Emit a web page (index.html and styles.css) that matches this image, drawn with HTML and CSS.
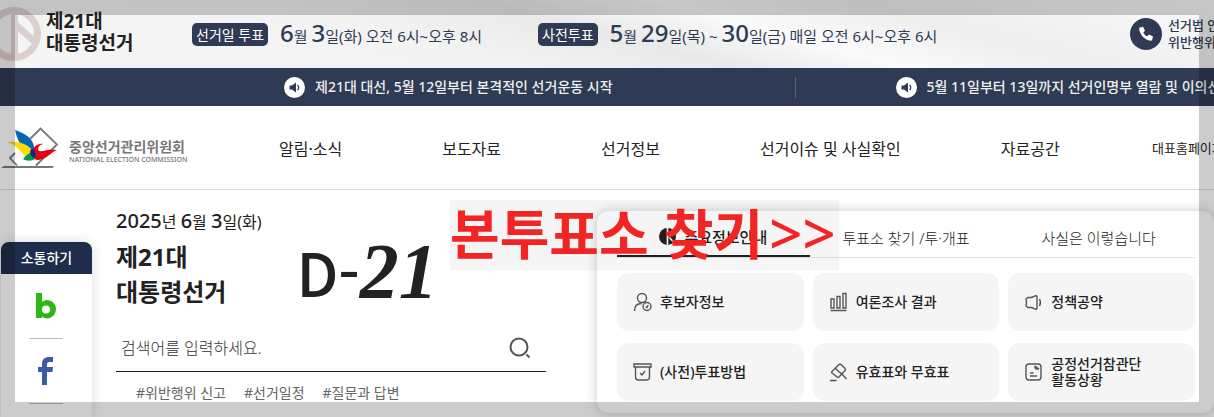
FILE: index.html
```html
<!DOCTYPE html>
<html lang="ko">

<head>
    <meta charset="UTF-8">
    <meta name="viewport" content="width=device-width, initial-scale=1.0">
    <title>제21대 대통령선거</title>
    <link rel="stylesheet" href="styles.css">
</head>

<body>
    <div class="top-bar">
        <svg class="stamp" width="41" height="54" viewBox="0 0 41 54" fill="none" stroke="#dccfcf" stroke-width="7">
            <circle cx="14" cy="27" r="23.5" />
            <path d="M14.500 4v46M16 18l18 16" />
        </svg>
        <strong class="top-title">제21대<br>대통령선거</strong>
        <p class="schedule first"><span class="badge">선거일 투표</span><span><b>6</b>월 <b>3</b>일(화) 오전 6시~오후 8시</span></p>
        <p class="schedule"><span class="badge">사전투표</span><span><b>5</b>월 <b>29</b>일(목) ~ <b>30</b>일(금) 매일 오전 6시~오후 6시</span></p>
        <a class="call" href="#">
            <svg width="32" height="32" viewBox="0 0 32 32">
                <circle cx="16" cy="16" r="16" fill="#2f3a54" />
                <path d="M10 9.500l3-.8 2 4-1.700 1.700c.8 1.700 2.200 3.100 3.900 3.900l1.800-1.700 4 2-.8 3.200c-.2.700-.8 1-1.500.9C14.800 22 10 17.200 9.200 11c-.1-.7.2-1.300.8-1.500z" fill="#fff" />
            </svg>
            <span>선거법 안내<br>위반행위 신고</span>
        </a>
    </div>

    <div class="notice-bar">
        <a class="notice" href="#">
            <svg width="21" height="21" viewBox="0 0 21 21">
                <circle cx="10.500" cy="10.500" r="10.500" fill="#fff" />
                <path d="M5.500 8.500H8l4-3v10l-4-3H5.500z" fill="#2f3a54" />
                <path d="M13.500 8q2.500 2.500 0 5" fill="none" stroke="#2f3a54" stroke-width="1.200" />
            </svg>
            제21대 대선, 5월 12일부터 본격적인 선거운동 시작
        </a>
        <a class="notice" href="#">
            <svg width="21" height="21" viewBox="0 0 21 21">
                <circle cx="10.500" cy="10.500" r="10.500" fill="#fff" />
                <path d="M5.500 8.500H8l4-3v10l-4-3H5.500z" fill="#2f3a54" />
                <path d="M13.500 8q2.500 2.500 0 5" fill="none" stroke="#2f3a54" stroke-width="1.200" />
            </svg>
            5월 11일부터 13일까지 선거인명부 열람 및 이의신청
        </a>
    </div>

    <header class="header">
        <a class="logo" href="#">
            <svg width="58" height="44" viewBox="0 0 58 44">
                <path d="M24 18L39.500 2.500 56 18.500 35 39.500M14 27l-5 5 7 7.500" fill="none" stroke="#777" stroke-width="1.800" />
                <path d="M0 42L3 40h50l-1.500 2z" fill="#777" />
                <path d="M14 4c9 3 18 8 19 17l1 8c-4 1-6-2-9-5-6-5-9-11-11-20z" fill="#0068b7" />
                <path d="M7 16c10-1 20 2 25 9l2 6c-4 2-8 1-11-2-4-5-9-10-16-13z" fill="#ffd900" />
                <path d="M42 18c-5-1-11 3-11 10 0 6 5 7 10 5 7-2 9-7 15-9-8-2-13 2-18 1-2-3 0-6 4-7z" fill="#e60012" />
                <path d="M22 33c3-4 7-7 12-8 3 3 1 7-2 9-3 1-7 1-10-1z" fill="#009944" />
                <path d="M30 23c4 0 6 4 4 9-4-1-6-4-4-9z" fill="#1d2088" />
            </svg>
            <span class="logo-text">중앙선거관리위원회<small>NATIONAL ELECTION COMMISSION</small></span>
        </a>
        <nav class="nav">
            <a href="#">알림·소식</a>
            <a href="#">보도자료</a>
            <a href="#">선거정보</a>
            <a href="#">선거이슈 및 사실확인</a>
            <a href="#">자료공간</a>
        </nav>
        <a class="home-link" href="#">대표홈페이지</a>
    </header>

    <main class="main">
        <aside class="share">
            <h2>소통하기</h2>
            <a href="#" aria-label="블로그">
                <svg width="22" height="26" viewBox="0 0 22 26">
                    <path fill-rule="evenodd" d="M1 0h6v9c1-1 3-2 5-2 5 0 9 4 9 9s-4 9.500-9 9.500c-2 0-4-1-5-2V25H1zM11 12.500a4 4 0 1 0 0 8 4 4 0 0 0 0-8z" fill="#2db816" />
                </svg>
            </a>
            <a href="#" aria-label="페이스북">
                <svg width="16" height="28" viewBox="0 0 16 28">
                    <path d="M4 28V15H0v-5h4V7c0-5 3-7 7-7h4v5h-3c-2 0-3 .5-3 2.500V10h6l-.5 5H9v13z" fill="#3b5ba9" />
                </svg>
            </a>
        </aside>

        <section class="intro">
            <p class="date"><b>2025</b>년 <b>6</b>월 <b>3</b>일(화)</p>
            <div class="intro-row">
                <h1>제21대<br>대통령선거</h1>
                <p class="dday">D-<em>21</em></p>
            </div>
            <form class="search">
                <input type="text" placeholder="검색어를 입력하세요." aria-label="검색어">
                <button type="button" aria-label="검색">
                    <svg width="22" height="22" viewBox="0 0 22 22" fill="none" stroke="#555" stroke-width="2">
                        <circle cx="10" cy="10" r="8.500" />
                        <path d="M17.500 17.500l3 3" />
                    </svg>
                </button>
            </form>
            <div class="tags">
                <a href="#">#위반행위 신고</a>
                <a href="#">#선거일정</a>
                <a href="#">#질문과 답변</a>
            </div>
        </section>

        <section class="panel">
            <div class="tabs">
                <button type="button" class="active">
                    <svg width="17" height="17" viewBox="0 0 17 17">
                        <circle cx="8.500" cy="8.500" r="8.500" fill="#222" />
                        <path d="M8.500 0v17M9 8l6 6.500" stroke="#fff" stroke-width="1.600" />
                    </svg>
                    주요정보안내
                </button>
                <button type="button">투표소 찾기 /투·개표</button>
                <button type="button">사실은 이렇습니다</button>
            </div>
            <div class="cards">
                <a href="#">
                    <svg viewBox="0 0 20 20">
                        <circle cx="9" cy="6" r="4.500" />
                        <path d="M1.500 19c0-5 3-7.500 7-7.500" />
                        <circle cx="14" cy="14.500" r="4" />
                        <path d="M12.800 14.500l1 1 1.500-2.500" />
                    </svg>
                    후보자정보
                </a>
                <a href="#">
                    <svg viewBox="0 0 20 20">
                        <path d="M2 7h3v9H2zM8 4.500h3V16H8zM14 1.500h3V16h-3zM1.500 18.500h16" />
                    </svg>
                    여론조사 결과
                </a>
                <a href="#">
                    <svg viewBox="0 0 20 20">
                        <path d="M2 7l2-1.500h3.500L12 3.500l1 1v12l-1 1-4.500-2H4L2 14l.5-3.500zM15.500 7q2 3.500 0 7" />
                    </svg>
                    정책공약
                </a>
                <a href="#">
                    <svg viewBox="0 0 20 20">
                        <path d="M1 2h17v3H1zM2.500 5v10q0 3 3 3h8q3 0 3-3V5M7 11l2 2 3-4" />
                    </svg>
                    (사전)투표방법
                </a>
                <a href="#">
                    <svg viewBox="0 0 20 20">
                        <path d="M3 9.500L10 2.500q1-1 2 0l4 4q1 1 0 2L10 15q-1 1-2 0l-5-4q-.8-.8 0-1.500zM6.500 6.500l6.500 6M12 11l5.500 6M1 18.500h6.500" />
                    </svg>
                    유효표와 무효표
                </a>
                <a href="#">
                    <svg viewBox="0 0 20 20">
                        <path d="M5 2h9q3 0 3 3v10q0 3-3 3H5q-3 0-3-3V5q0-3 3-3zM11 4v1q0 2 2 2h2M11 4l4 3M6 11h3.500M6 14h7" />
                    </svg>
                    <span>공정선거참관단<br>활동상황</span>
                </a>
            </div>
        </section>
    </main>

    <a class="find-banner" href="#">본투표소 찾기<span>&gt;&gt;</span></a>
    <div class="frame"></div>
</body>

</html>
```

FILE: styles.css
```css
* {
    box-sizing: border-box;
}

body {
    margin: 0;
    font-family: "Noto Sans", "Noto Sans CJK KR", sans-serif;
    font-size: 16px;
    color: #222;
    background-color: #fff;
    white-space: nowrap;
    overflow: hidden;
}

a {
    color: inherit;
    text-decoration: none;
}

p, h1, h2 {
    margin: 0;
}

svg {
    flex: none;
}

button {
    padding: 0;
    border: none;
    background: none;
    font-family: inherit;
    color: inherit;
    cursor: pointer;
}

.top-bar {
    display: flex;
    align-items: center;
    height: 68px;
    color: #2f3a54;
    background: linear-gradient(15deg, #f5f5f5 0%, #f3f3f3 35%, #e9e9e9 50%, #fafafa 62%, #eeeeee 75%, #fafafa 100%);
}

.top-title {
    width: 146px;
    margin-left: 5px;
    padding-bottom: 4px;
    font-size: 19px;
    line-height: 22px;
    color: #222;
}

.schedule {
    display: flex;
    align-items: center;
    gap: 12px;
    font-size: 15px;
    line-height: 30px;
}

.schedule.first {
    margin-right: 56px;
}

.schedule b {
    font-size: 24px;
    font-weight: 500;
}

.badge {
    padding: 0 4px;
    border-radius: 5px;
    font-size: 14px;
    line-height: 23px;
    color: #fff;
    background-color: #2f3a54;
}

.call {
    display: flex;
    align-items: center;
    gap: 6px;
    width: 84px;
    margin-left: auto;
    font-size: 13px;
    font-weight: 500;
    line-height: 17px;
}

.notice-bar {
    display: flex;
    align-items: center;
    height: 38px;
    padding-left: 284px;
    color: #eee;
    background-color: #2f3a54;
}

.notice {
    display: flex;
    align-items: center;
    gap: 10px;
    font-size: 14px;
    font-weight: 500;
    line-height: 20px;
}

.notice + .notice {
    margin-left: 182px;
    padding-left: 100px;
    border-left: 1px solid #5b6479;
}

.header {
    display: flex;
    align-items: center;
    height: 84px;
    border-bottom: 1px solid #ddd;
}

.logo {
    display: flex;
    align-items: center;
    gap: 10px;
    width: 279px;
    padding-left: 1px;
}

.logo-text {
    padding-top: 6px;
    font-size: 14px;
    font-weight: bold;
    line-height: 18px;
    color: #777;
}

.logo-text small {
    display: block;
    font-size: 7px;
    font-weight: 500;
    line-height: 8px;
}

.nav {
    display: flex;
    gap: 100px;
}

.home-link {
    width: 62px;
    margin-left: auto;
    font-size: 13px;
}

.main {
    display: flex;
    align-items: flex-start;
}

.share {
    width: 91px;
    height: 175px;
    margin: 52px 24px 0 1px;
    border-radius: 8px 8px 0 0;
    box-shadow: 0 0 12px rgba(0, 0, 0, 0.15);
}

.share h2 {
    border-radius: 8px 8px 0 0;
    font-size: 14px;
    font-weight: 500;
    line-height: 32px;
    text-align: center;
    color: #fff;
    background-color: #202c4b;
}

.share a {
    display: flex;
    align-items: center;
    justify-content: center;
    height: 65px;
    margin: 0 29px 0 28px;
    border-bottom: 1px solid #bbb;
}

.intro {
    width: 430px;
    padding-top: 20px;
}

.date {
    line-height: 22px;
}

.date b {
    font-size: 20px;
    font-weight: 500;
}

.intro-row {
    display: flex;
    gap: 70px;
    padding-top: 6px;
}

.intro h1 {
    font-size: 24px;
    line-height: 35px;
}

.dday {
    font-family: "Noto Sans CJK KR", sans-serif;
    font-size: 60px;
    font-weight: 500;
    line-height: 64px;
}

.dday em {
    font-family: "Liberation Serif", serif;
    font-size: 78px;
    font-weight: bold;
    line-height: 64px;
}

.search {
    display: flex;
    align-items: center;
    margin-top: 15px;
    padding: 0 15px 0 5px;
    border-bottom: 1px solid #222;
}

.search input {
    flex: 1;
    height: 47px;
    padding: 0;
    border: none;
    outline: none;
    font-family: inherit;
    font-size: 16px;
    font-weight: 300;
}

.search input::placeholder {
    color: #333;
}

.search svg {
    display: block;
}

.tags {
    display: flex;
    gap: 18px;
    padding: 11px 20px 0;
    font-size: 14px;
    line-height: 20px;
    color: #666;
}

.panel {
    flex: 1;
    margin: 21px 0 0 51px;
    padding: 0 19px 12px 20px;
    border-radius: 12px;
    box-shadow: 0 0 12px rgba(0, 0, 0, 0.2);
}

.tabs {
    display: grid;
    grid-template-columns: repeat(3, 1fr);
    height: 47px;
    border-bottom: 1px solid #e5e5e5;
}

.tabs button {
    padding-top: 6px;
    font-size: 15px;
    font-weight: 300;
}

.tabs .active {
    display: flex;
    align-items: center;
    justify-content: center;
    gap: 8px;
    border-bottom: 2px solid #222;
    font-weight: 500;
}

.cards {
    display: grid;
    grid-template-columns: repeat(3, 1fr);
    gap: 12px 9px;
    padding-top: 15px;
}

.cards a {
    display: flex;
    align-items: center;
    gap: 7px;
    height: 58px;
    padding-left: 16px;
    border-radius: 12px;
    font-size: 14px;
    font-weight: 500;
    line-height: 16px;
    background-color: #f5f5f5;
}

.cards svg {
    width: 20px;
    height: 20px;
    fill: none;
    stroke: #555;
    stroke-width: 1.4;
}

/* banner and frame lie over the page */
.find-banner {
    position: absolute;
    top: 200px;
    left: 450px;
    display: flex;
    align-items: baseline;
    gap: 6px;
    height: 70px;
    padding-right: 3px;
    font-family: "Noto Sans CJK KR", sans-serif;
    font-size: 54px;
    font-weight: bold;
    line-height: 64px;
    color: #f22424;
    background-color: rgba(0, 0, 0, 0.04);
}

.find-banner span {
    font-family: "Noto Sans", sans-serif;
    font-size: 58px;
    font-weight: 500;
    line-height: 60px;
}

.frame {
    position: fixed;
    inset: 0;
    border: 15px solid rgba(0, 0, 0, 0.2);
    pointer-events: none;
}
```
